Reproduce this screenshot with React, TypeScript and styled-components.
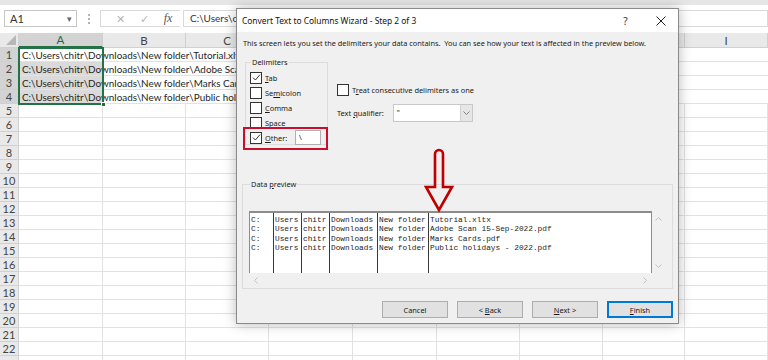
import styled, { createGlobalStyle } from "styled-components";

const GlobalStyle = createGlobalStyle`
  html, body {
    margin: 0;
    padding: 0;
    background: #ffffff;
  }
  body {
    width: 768px;
    height: 360px;
    overflow: hidden;
    font-family: "Noto Sans", "Open Sans", sans-serif;
  }
  * {
    box-sizing: border-box;
  }
`;

const COLS = ["A", "B", "C", "D", "E", "F", "G", "H", "I"];
const PATH = "C:\\Users\\chitr\\Downloads\\New folder\\";
const FILES = [
  "Tutorial.xltx",
  "Adobe Scan 15-Sep-2022.pdf",
  "Marks Cards.pdf",
  "Public holidays - 2022.pdf",
];
const EMPTY_ROWS = Array.from({ length: 19 }, (_, i) => i + 5);

const PREVIEW_COLS = [
  { width: 24, values: ["C:", "C:", "C:", "C:"] },
  { width: 28, values: ["Users", "Users", "Users", "Users"] },
  { width: 28, values: ["chitr", "chitr", "chitr", "chitr"] },
  { width: 48, values: ["Downloads", "Downloads", "Downloads", "Downloads"] },
  { width: 51, values: ["New folder", "New folder", "New folder", "New folder"] },
  { width: 0, values: FILES },
];

const DELIMS = [
  { label: "Tab", key: "T", checked: true },
  { label: "Semicolon", key: "m", checked: false },
  { label: "Comma", key: "C", checked: false },
  { label: "Space", key: "S", checked: false },
];

// label with one underlined access key, kept in one span so flex gaps don't split it
const Underlined = ({ text, k }: { text: string; k: string }) => {
  const i = text.indexOf(k);
  if (i < 0) return <span>{text}</span>;
  return (
    <span>
      {text.slice(0, i)}
      <u>{text[i]}</u>
      {text.slice(i + 1)}
    </span>
  );
};

const Check = ({ checked }: { checked: boolean }) => (
  <CheckBox>
    {checked && (
      <svg width="9" height="9" viewBox="0 0 9 9">
        <path d="M1 4.6 L3.4 7 L8 1.6" fill="none" stroke="#333" strokeWidth="1" />
      </svg>
    )}
  </CheckBox>
);

const App = () => {
  return (
    <Page>
      <GlobalStyle />
      <FormulaBar>
        <NameBox>
          <span>A1</span>
          <NameArrow>▾</NameArrow>
        </NameBox>
        <Grip>
          <i />
          <i />
          <i />
        </Grip>
        <FuncBox>
          <FuncIcon>✕</FuncIcon>
          <FuncIcon>✓</FuncIcon>
          <FxIcon>fx</FxIcon>
        </FuncBox>
        <FormulaInput>{PATH + FILES[0]}</FormulaInput>
      </FormulaBar>

      <SheetWrap>
        <Sheet>
          <Corner>
            <svg width="10" height="10" viewBox="0 0 10 10">
              <path d="M10 0 L10 10 L0 10 Z" fill="#b8b8b8" />
            </svg>
          </Corner>
          {COLS.map((c) => (
            <ColHead key={c} $selected={c === "A"}>
              {c}
            </ColHead>
          ))}

          {FILES.map((f, i) => (
            <Row key={f}>
              <RowHead $selected>{i + 1}</RowHead>
              <Cell $selected={i > 0}>
                <CellText>{PATH + f}</CellText>
              </Cell>
              <SpanCell />
            </Row>
          ))}

          {EMPTY_ROWS.map((r) => (
            <Row key={r}>
              <RowHead>{r < 23 ? r : ""}</RowHead>
              {COLS.map((c) => (
                <Cell key={c} />
              ))}
            </Row>
          ))}
        </Sheet>
        <Selection>
          <Handle />
        </Selection>
      </SheetWrap>

      <Dialog>
        <TitleBar>
          <Title>Convert Text to Columns Wizard - Step 2 of 3</Title>
          <TitleButton>?</TitleButton>
          <TitleButton>
            <svg width="10" height="10" viewBox="0 0 10 10">
              <path d="M0.5 0.5 L9.5 9.5 M9.5 0.5 L0.5 9.5" stroke="#222" strokeWidth="1" />
            </svg>
          </TitleButton>
        </TitleBar>
        <Body>
          <Description>
            This screen lets you set the delimiters your data contains.&nbsp; You can see how your text is
            affected in the preview below.
          </Description>

          <OptionsRow>
            <GroupBox $width={83} $height={88}>
              <Legend>Delimiters</Legend>
              <CheckList>
                {DELIMS.map((d) => (
                  <CheckRow key={d.label}>
                    <Check checked={d.checked} />
                    <Underlined text={d.label} k={d.key} />
                  </CheckRow>
                ))}
                <CheckRow>
                  <Check checked />
                  <OtherLabel>
                    <Underlined text="Other:" k="O" />
                  </OtherLabel>
                  <OtherInput>\</OtherInput>
                </CheckRow>
              </CheckList>
            </GroupBox>

            <RightOptions>
              <CheckRow>
                <Check checked={false} />
                <Underlined text="Treat consecutive delimiters as one" k="r" />
              </CheckRow>
              <QualifierRow>
                <span>
                  Text <u>q</u>ualifier:
                </span>
                <SelectBox>
                  <SelectValue>"</SelectValue>
                  <SelectButton>
                    <svg width="7" height="4" viewBox="0 0 7 4">
                      <path d="M0.5 0.5 L3.5 3.5 L6.5 0.5" fill="none" stroke="#777" strokeWidth="0.9" />
                    </svg>
                  </SelectButton>
                </SelectBox>
              </QualifierRow>
            </RightOptions>
          </OptionsRow>

          <PreviewGroup>
            <Legend>
              Data <u>p</u>review
            </Legend>
            <PreviewFrame>
              <PreviewBox>
                {PREVIEW_COLS.map((col, i) => (
                  <PreviewCol key={i} $width={col.width}>
                    {col.values.map((v, j) => (
                      <PreviewLine key={j}>{v}</PreviewLine>
                    ))}
                  </PreviewCol>
                ))}
              </PreviewBox>
              <VScroll>
                <Chevron>
                  <svg width="7" height="4" viewBox="0 0 7 4">
                    <path d="M0.5 3.5 L3.5 0.5 L6.5 3.5" fill="none" stroke="#bbb" strokeWidth="0.9" />
                  </svg>
                </Chevron>
                <Chevron>
                  <svg width="7" height="4" viewBox="0 0 7 4">
                    <path d="M0.5 0.5 L3.5 3.5 L6.5 0.5" fill="none" stroke="#bbb" strokeWidth="0.9" />
                  </svg>
                </Chevron>
              </VScroll>
              <HScroll>
                <svg width="4" height="7" viewBox="0 0 4 7">
                  <path d="M3.5 0.5 L0.5 3.5 L3.5 6.5" fill="none" stroke="#bbb" strokeWidth="0.9" />
                </svg>
                <svg width="4" height="7" viewBox="0 0 4 7">
                  <path d="M0.5 0.5 L3.5 3.5 L0.5 6.5" fill="none" stroke="#bbb" strokeWidth="0.9" />
                </svg>
              </HScroll>
            </PreviewFrame>
          </PreviewGroup>

          <ButtonRow>
            <DialogButton>Cancel</DialogButton>
            <DialogButton>
              <span>
                &lt; <u>B</u>ack
              </span>
            </DialogButton>
            <DialogButton>
              <span>
                <u>N</u>ext &gt;
              </span>
            </DialogButton>
            <DialogButton $primary>
              <span>
                <u>F</u>inish
              </span>
            </DialogButton>
          </ButtonRow>
        </Body>

        <Highlight />
        <DownArrow width="32" height="66" viewBox="0 0 32 66">
          <path
            d="M12 6 A4 4 0 0 1 20 6 L20 39 L29 39 L16 62 L3 39 L12 39 Z"
            fill="none"
            stroke="#c00000"
            strokeWidth="2.6"
            strokeLinejoin="miter"
          />
        </DownArrow>
      </Dialog>
    </Page>
  );
};

export default App;

const Page = styled.div`
  position: relative;
  width: 768px;
  height: 360px;
  overflow: hidden;
  background: #ffffff;
`;

/* ---------- formula bar ---------- */

const FormulaBar = styled.div`
  height: 33px;
  border-top: 5px solid #e6e6e6;
  padding-top: 5px;
  display: flex;
  align-items: flex-start;
  background: #ffffff;
  font-family: Lato, "Liberation Sans", sans-serif;
  font-size: 10px;
  color: #333;
`;

const NameBox = styled.div`
  margin-left: 4px;
  width: 73px;
  height: 17px;
  border: 1px solid #c6c6c6;
  display: flex;
  align-items: center;
  justify-content: space-between;
  padding: 0 4px 0 5px;
  font-size: 11px;
`;

const NameArrow = styled.span`
  font-size: 9px;
  color: #666;
`;

const Grip = styled.div`
  width: 23px;
  height: 17px;
  display: flex;
  flex-direction: column;
  align-items: center;
  justify-content: center;
  gap: 2px;

  i {
    display: block;
    width: 2px;
    height: 2px;
    background: #b4b4b4;
  }
`;

const FuncBox = styled.div`
  width: 80px;
  height: 17px;
  border: 1px solid #d9d9d9;
  border-right: none;
  display: flex;
  align-items: center;
  padding-left: 7px;
`;

const FuncIcon = styled.span`
  width: 24px;
  text-align: center;
  color: #b5b5b5;
  font-size: 11px;
`;

const FxIcon = styled.span`
  width: 24px;
  text-align: center;
  font-family: "Liberation Serif", serif;
  font-style: italic;
  font-size: 12px;
  color: #555;
`;

const FormulaInput = styled.div`
  flex: 1;
  height: 17px;
  margin-left: 3px;
  border: 1px solid #d9d9d9;
  padding-left: 6px;
  line-height: 15px;
  white-space: nowrap;
  overflow: hidden;
`;

/* ---------- sheet ---------- */

const SheetWrap = styled.div`
  position: relative;
`;

const Sheet = styled.div`
  display: grid;
  grid-template-columns: 19px 84px 83px 83px 84px 84px 83px 83px 82px 83px;
  grid-template-rows: 15px;
  grid-auto-rows: 14px;
  font-family: Lato, "Liberation Sans", sans-serif;
  font-size: 11px;
  color: #222;
`;

const Row = styled.div`
  display: contents;
`;

const HeadBase = styled.div`
  background: #e9e9e9;
  border-right: 1px solid #d0d0d0;
  border-bottom: 1px solid #d0d0d0;
  display: flex;
  align-items: center;
  justify-content: center;
  color: #444;
`;

const Corner = styled(HeadBase)`
  justify-content: flex-end;
  align-items: flex-end;
  padding: 0 2px 2px 0;
`;

const ColHead = styled(HeadBase)<{ $selected?: boolean }>`
  font-size: 11.5px;
  background: ${(p) => (p.$selected ? "#d3d3d3" : "#e9e9e9")};
  color: ${(p) => (p.$selected ? "#1e6b41" : "#444")};
  border-bottom: ${(p) => (p.$selected ? "2px solid #217346" : "1px solid #d0d0d0")};
`;

const RowHead = styled(HeadBase)<{ $selected?: boolean }>`
  background: ${(p) => (p.$selected ? "#d3d3d3" : "#e9e9e9")};
  font-size: 11px;
`;

const Cell = styled.div<{ $selected?: boolean }>`
  background: ${(p) => (p.$selected ? "#dadada" : "#ffffff")};
  border-right: 1px solid #e2e2e2;
  border-bottom: 1px solid #e2e2e2;
  overflow: visible;
`;

const CellText = styled.div`
  white-space: nowrap;
  padding-left: 3px;
  line-height: 14px;
  font-size: 9.9px;
  color: #1e1e1e;
`;

const SpanCell = styled.div`
  grid-column: span 8;
  border-bottom: 1px solid #e2e2e2;
`;

const Selection = styled.div`
  position: absolute;
  left: 18px;
  top: 14px;
  width: 86px;
  height: 58px;
  border: 2px solid #217346;
  pointer-events: none;
`;

const Handle = styled.div`
  position: absolute;
  right: -4px;
  bottom: -4px;
  width: 5px;
  height: 5px;
  background: #217346;
  border: 1px solid #fff;
`;

/* ---------- dialog ---------- */

const Dialog = styled.div`
  position: absolute;
  left: 236px;
  top: 8px;
  width: 443px;
  height: 316px;
  border: 1px solid #8a8a8a;
  background: #f0f0f0;
  box-shadow: 0 0 12px rgba(0, 0, 0, 0.28);
  font-family: "Noto Sans", "Open Sans", sans-serif;
  color: #1a1a1a;
  display: flex;
  flex-direction: column;
`;

const TitleBar = styled.div`
  height: 23px;
  background: #ffffff;
  display: flex;
  align-items: center;
  padding-left: 5px;
`;

const Title = styled.div`
  flex: 1;
  font-size: 8.4px;
  color: #111;
`;

const TitleButton = styled.div`
  width: 35px;
  display: flex;
  justify-content: center;
  align-items: center;
  font-size: 10px;
  color: #333;
`;

const Body = styled.div`
  flex: 1;
  padding: 6px 6px 0 6px;
  display: flex;
  flex-direction: column;
  font-size: 7.4px;
`;

const Description = styled.div`
  line-height: 10px;
  white-space: nowrap;
  font-size: 7.35px;
`;

const OptionsRow = styled.div`
  display: flex;
  margin-top: 9px;
  padding-left: 2px;
  gap: 9px;
`;

const GroupBox = styled.fieldset<{ $width: number; $height: number }>`
  margin: 0;
  padding: 0 4px;
  width: ${(p) => p.$width}px;
  height: ${(p) => p.$height}px;
  border: 1px solid #dcdcdc;
  min-width: 0;
`;

const Legend = styled.legend`
  padding: 0 1px;
  margin-left: 1px;
  line-height: 10px;
  font-size: 7.4px;
  color: #1a1a1a;
`;

const CheckList = styled.div`
  display: grid;
  grid-auto-rows: 15px;
  margin-top: 3px;
`;

const CheckRow = styled.div`
  display: flex;
  align-items: center;
  gap: 3px;
  white-space: nowrap;
`;

const CheckBox = styled.span`
  width: 12px;
  height: 12px;
  flex: none;
  border: 1px solid #333;
  background: #ffffff;
  display: flex;
  align-items: center;
  justify-content: center;
`;

const OtherLabel = styled.span`
  width: 27px;
`;

const OtherInput = styled.div`
  width: 26px;
  height: 15px;
  background: #ffffff;
  border: 1px solid #b0b0b0;
  padding-left: 3px;
  line-height: 13px;
`;

const RightOptions = styled.div`
  padding-top: 27px;
  display: flex;
  flex-direction: column;
  gap: 8px;
`;

const QualifierRow = styled.div`
  display: flex;
  align-items: center;
  gap: 9px;
`;

const SelectBox = styled.div`
  width: 80px;
  height: 18px;
  background: #ffffff;
  border: 1px solid #c8c8c8;
  display: flex;
`;

const SelectValue = styled.div`
  flex: 1;
  padding: 2px 0 0 3px;
`;

const SelectButton = styled.div`
  width: 12px;
  background: #e6e6e6;
  border-left: 1px solid #d0d0d0;
  display: flex;
  align-items: center;
  justify-content: center;
`;

const PreviewGroup = styled.fieldset`
  margin: 34px 0 0 -1px;
  padding: 0 6px;
  width: 431px;
  height: 110px;
  border: 1px solid #dcdcdc;
  min-width: 0;
`;

const PreviewFrame = styled.div`
  margin-top: 22px;
  display: grid;
  grid-template-columns: 403px 13px;
  grid-template-rows: 62px 15px;
`;

const PreviewBox = styled.div`
  display: flex;
  background: #ffffff;
  border-top: 2px solid #8c8c8c;
  border-left: 1px solid #8c8c8c;
  border-right: 1px solid #8c8c8c;
  font-family: "Liberation Mono", "DejaVu Sans Mono", monospace;
  font-size: 7.8px;
  color: #1e1e1e;
  overflow: hidden;
  padding-top: 2px;
`;

const PreviewCol = styled.div<{ $width: number }>`
  ${(p) => (p.$width ? `width: ${p.$width}px; border-right: 1px solid #3a3a3a;` : "flex: 1;")}
  flex-shrink: 0;
  padding-left: 1px;
  margin-top: -2px;
  padding-top: 3px;
  white-space: nowrap;
`;

const PreviewLine = styled.div`
  height: 9.3px;
  line-height: 9.3px;
`;

const VScroll = styled.div`
  grid-row: span 2;
  display: flex;
  flex-direction: column;
  align-items: center;
  justify-content: space-between;
  padding: 6px 0 20px;
`;

const Chevron = styled.div`
  display: flex;
`;

const HScroll = styled.div`
  display: flex;
  align-items: center;
  justify-content: space-between;
  padding: 0 5px;
`;

const ButtonRow = styled.div`
  display: flex;
  justify-content: flex-end;
  gap: 9px;
  margin-top: 12px;
  width: 430px;
`;

const DialogButton = styled.div<{ $primary?: boolean }>`
  width: 66px;
  height: 17px;
  background: #e1e1e1;
  border: 1px solid ${(p) => (p.$primary ? "#0078d7" : "#adadad")};
  box-shadow: ${(p) => (p.$primary ? "inset 0 0 0 1px #0078d7" : "none")};
  display: flex;
  align-items: center;
  justify-content: center;
  font-size: 7.4px;
  color: #1a1a1a;
`;

const Highlight = styled.div`
  position: absolute;
  left: 6px;
  top: 118px;
  width: 85px;
  height: 23px;
  border: 2px solid #c8102e;
  pointer-events: none;
`;

const DownArrow = styled.svg`
  position: absolute;
  left: 186px;
  top: 139px;
`;
